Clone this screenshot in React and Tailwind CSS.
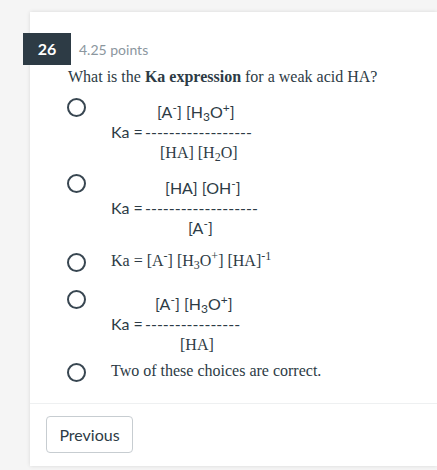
import React from "react";

const sans = "font-['Lato','Open_Sans',sans-serif]";
const serif = "font-['Liberation_Serif','Times_New_Roman',serif]";

function Radio() {
  return <span className="block w-[19px] h-[19px] shrink-0 rounded-full border-[2px] border-[#384651] bg-white" />;
}

function Fraction({ num, numPad, dashes, den, denPad }) {
  return (
    <div className={`pt-[4px] text-[16px] leading-[20px] text-[#2d3b45] ${sans}`}>
      <div className="whitespace-nowrap" style={{ paddingLeft: numPad }}>{num}</div>
      <div className="whitespace-nowrap flex">
        <span className="w-[34px] shrink-0">Ka =</span>
        <span>{dashes}</span>
      </div>
      <div className="whitespace-nowrap" style={{ paddingLeft: denPad }}>{den}</div>
    </div>
  );
}

export default function App() {
  return (
    <div className="min-h-[470px] w-full bg-[#f5f5f5] pt-[12px] overflow-hidden">
      <div className="ml-[30px] h-[454px] bg-white shadow-[0_0_4px_rgba(0,0,0,0.12)] pt-[21px] flex flex-col">
        <div className="flex items-center h-[32px]">
          <div className={`-ml-[7px] w-[48px] h-[32px] bg-[#2d3b45] text-white text-[16px] font-bold flex items-center justify-center ${sans}`}>
            26
          </div>
          <div className={`ml-[8px] text-[14px] text-[#8b969e] ${sans}`}>4.25 points</div>
        </div>

        <div className={`ml-[38px] mt-[2px] text-[16px] leading-[20px] text-[#2d3b45] ${serif}`}>
          What is the <b>Ka expression</b> for a weak acid HA?
        </div>

        <div className="ml-[37px] mt-[11px] flex flex-col">
          <div className="flex gap-[25px]">
            <Radio />
            <Fraction
              numPad={46}
              num={<>[A<sup>-</sup>] [H<sub>3</sub>O<sup>+</sup>]</>}
              dashes="------------------"
              denPad={49}
              den={<span className={`${serif} text-[16px]`}>[HA] [H<sub>2</sub>O]</span>}
            />
          </div>

          <div className="flex gap-[25px] mt-[11px]">
            <Radio />
            <Fraction
              numPad={54}
              num={<>[HA] [OH<sup>-</sup>]</>}
              dashes="-------------------"
              denPad={77}
              den={<>[A<sup>-</sup>]</>}
            />
          </div>

          <div className="flex gap-[25px] mt-[13px] items-start">
            <span className="mt-[2px]"><Radio /></span>
            <div className={`text-[16px] leading-[20px] text-[#2d3b45] whitespace-nowrap ${serif}`}>
              Ka = [A<sup>-</sup>] [H<sub>3</sub>O<sup>+</sup>] [HA]<sup>-1</sup>
            </div>
          </div>

          <div className="flex gap-[25px] mt-[18px]">
            <Radio />
            <Fraction
              numPad={44}
              num={<>[A<sup>-</sup>] [H<sub>3</sub>O<sup>+</sup>]</>}
              dashes="----------------"
              denPad={69}
              den={<span className={`${serif} text-[16px]`}>[HA]</span>}
            />
          </div>

          <div className="flex gap-[25px] mt-[6px] items-start">
            <span className="mt-[2px]"><Radio /></span>
            <div className={`text-[16px] leading-[20px] text-[#2d3b45] whitespace-nowrap ${serif}`}>
              Two of these choices are correct.
            </div>
          </div>
        </div>

        <div className="mt-auto border-t border-[#eef0f1] h-[63px] pl-[16px] pt-[12px]">
          <button className={`h-[37px] w-[87px] rounded-[4px] border border-[#c7cdd1] bg-white text-[16px] text-[#2d3b45] ${sans}`}>
            Previous
          </button>
        </div>
      </div>
    </div>
  );
}
